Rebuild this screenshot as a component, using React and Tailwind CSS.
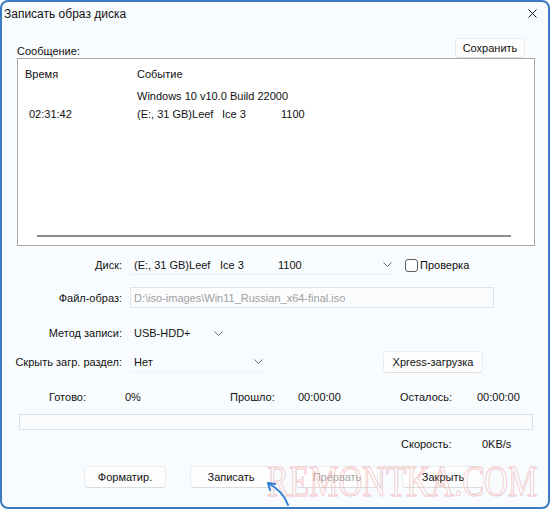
import React from 'react';

// small thin chevron used by the combo boxes
function Chevron() {
    return (
        <svg width="9" height="5" viewBox="0 0 9 5" className="shrink-0">
            <path d="M0.5 0.5 L4.5 4.5 L8.5 0.5" fill="none" stroke="#6b6b6b" strokeWidth="1" />
        </svg>
    );
}

function Btn({ children, className = '', disabled }) {
    return (
        <button
            className={`flex items-center justify-center rounded-[4px] border border-[#eaecef] border-b-[#dadde1] bg-[#fefefe] text-[11px] leading-none ${disabled ? 'text-[#a6a6a6]' : 'text-[#111]'} ${className}`}
        >
            {children}
        </button>
    );
}

export default function App() {
    return (
        <div className="relative box-border flex h-[509px] w-[550px] flex-col overflow-hidden rounded-[8px] border-2 border-[#3b7cc0] bg-[#f9fcfe] font-['Liberation_Sans',Arial,sans-serif] text-[11px] leading-[14px] text-[#111]">

            {/* Title bar */}
            <div className="flex h-[28px] shrink-0 items-start justify-between">
                <span className="pl-[2px] pt-[4px] text-[12px] leading-[16px] text-[#111]">Записать образ диска</span>
                <svg className="mr-[11px] mt-[7px]" width="9" height="9" viewBox="0 0 9 9">
                    <path d="M0.5 0.5 L8.5 8.5 M8.5 0.5 L0.5 8.5" stroke="#1a1a1a" strokeWidth="1" />
                </svg>
            </div>

            {/* Message header */}
            <div className="ml-[15px] mr-[23px] mt-[7px] flex h-[21px] shrink-0 items-end justify-between">
                <span>Сообщение:</span>
                <Btn className="h-[20px] w-[70px]">Сохранить</Btn>
            </div>

            {/* Log list */}
            <div className="ml-[15px] mr-[13px] flex h-[188px] shrink-0 flex-col border border-[#a8a8a8] bg-white">
                <div className="flex pl-[7px] pt-[8px]">
                    <span className="w-[112px]">Время</span>
                    <span>Событие</span>
                </div>
                <div className="mt-[8px] flex pl-[7px]">
                    <span className="w-[112px]" />
                    <span>Windows 10 v10.0 Build 22000</span>
                </div>
                <div className="mt-[4px] flex pl-[7px]">
                    <span className="w-[112px] pl-[4px]">02:31:42</span>
                    <span className="w-[85px]">(E:, 31 GB)Leef</span>
                    <span className="w-[59px]">Ice 3</span>
                    <span>1100</span>
                </div>
                <div className="mb-[8px] ml-[19px] mr-[23px] mt-auto h-[2px] bg-[#8c8c8c]" />
            </div>

            {/* Disk */}
            <div className="mt-[9px] flex h-[20px] shrink-0 items-center">
                <span className="w-[120px] text-right">Диск:</span>
                <div className="ml-[8px] flex h-[20px] w-[265px] items-center border-b border-[#eceef0] pl-[4px] pr-[3px]">
                    <span className="w-[86px]">(E:, 31 GB)Leef</span>
                    <span className="w-[58px]">Ice 3</span>
                    <span>1100</span>
                    <span className="ml-auto flex"><Chevron /></span>
                </div>
                <span className="ml-[10px] box-border h-[13px] w-[13px] rounded-[3px] border border-[#5c5c5c] bg-white" />
                <span className="ml-[2px]">Проверка</span>
            </div>

            {/* Image file */}
            <div className="mt-[12px] flex h-[21px] shrink-0 items-center">
                <span className="w-[120px] text-right">Файл-образ:</span>
                <div className="ml-[8px] box-border flex h-[21px] w-[364px] items-center border border-[#dfe2e6] bg-[#fbfcfd] pl-[3px] text-[#a0a0a0]">
                    D:\iso-images\Win11_Russian_x64-final.iso
                </div>
            </div>

            {/* Write method */}
            <div className="mt-[15px] flex h-[20px] shrink-0 items-center">
                <span className="w-[120px] text-right">Метод записи:</span>
                <div className="ml-[8px] flex h-[20px] w-[93px] items-center pl-[4px]">
                    <span>USB-HDD+</span>
                    <span className="ml-auto flex"><Chevron /></span>
                </div>
            </div>

            {/* Hide boot partition */}
            <div className="mt-[8px] flex h-[22px] shrink-0 items-center">
                <span className="w-[120px] text-right">Скрыть загр. раздел:</span>
                <div className="ml-[8px] flex h-[20px] w-[137px] items-center border-b border-[#f0f2f4] pl-[4px] pr-[4px]">
                    <span>Нет</span>
                    <span className="ml-auto flex"><Chevron /></span>
                </div>
                <Btn className="ml-[116px] h-[22px] w-[100px]">Xpress-загрузка</Btn>
            </div>

            {/* Stats */}
            <div className="mt-[17px] flex shrink-0 pl-[47px]">
                <span className="w-[76px]">Готово:</span>
                <span className="w-[105px]">0%</span>
                <span className="w-[68px]">Прошло:</span>
                <span className="w-[102px]">00:00:00</span>
                <span className="w-[77px]">Осталось:</span>
                <span>00:00:00</span>
            </div>

            {/* Progress bar */}
            <div className="ml-[17px] mr-[15px] mt-[10px] h-[16px] shrink-0 border border-[#dcdfe3] bg-[#fbfcfd]" />

            {/* Speed */}
            <div className="mt-[7px] flex shrink-0 pl-[399px]">
                <span className="w-[81px]">Скорость:</span>
                <span>0KB/s</span>
            </div>

            {/* Bottom buttons */}
            <div className="mt-[15px] flex shrink-0 gap-[24px] pl-[82px]">
                <Btn className="h-[22px] w-[82px]">Форматир.</Btn>
                <Btn className="h-[22px] w-[82px]">Записать</Btn>
                <Btn className="h-[22px] w-[82px]" disabled>Прервать</Btn>
                <Btn className="h-[22px] w-[82px]">Закрыть</Btn>
            </div>

            {/* watermark over the buttons */}
            <span className="pointer-events-none absolute left-[265px] top-[458px] origin-left scale-x-[0.75] whitespace-nowrap font-['Liberation_Serif',serif] text-[44px] leading-none text-transparent opacity-60 [-webkit-text-stroke:1px_#eea4a4]">
                REMONTKA.COM
            </span>

            {/* hand-drawn arrow */}
            <svg className="pointer-events-none absolute left-[260px] top-[474px]" width="32" height="32" viewBox="0 0 32 32">
                <path d="M26 29 C23 20 15 12 6 7" fill="none" stroke="#2f7fd8" strokeWidth="2" strokeLinecap="round" />
                <path d="M6 7 L13 8 M6 7 L8 14" fill="none" stroke="#2f7fd8" strokeWidth="2" strokeLinecap="round" />
            </svg>
        </div>
    );
}
